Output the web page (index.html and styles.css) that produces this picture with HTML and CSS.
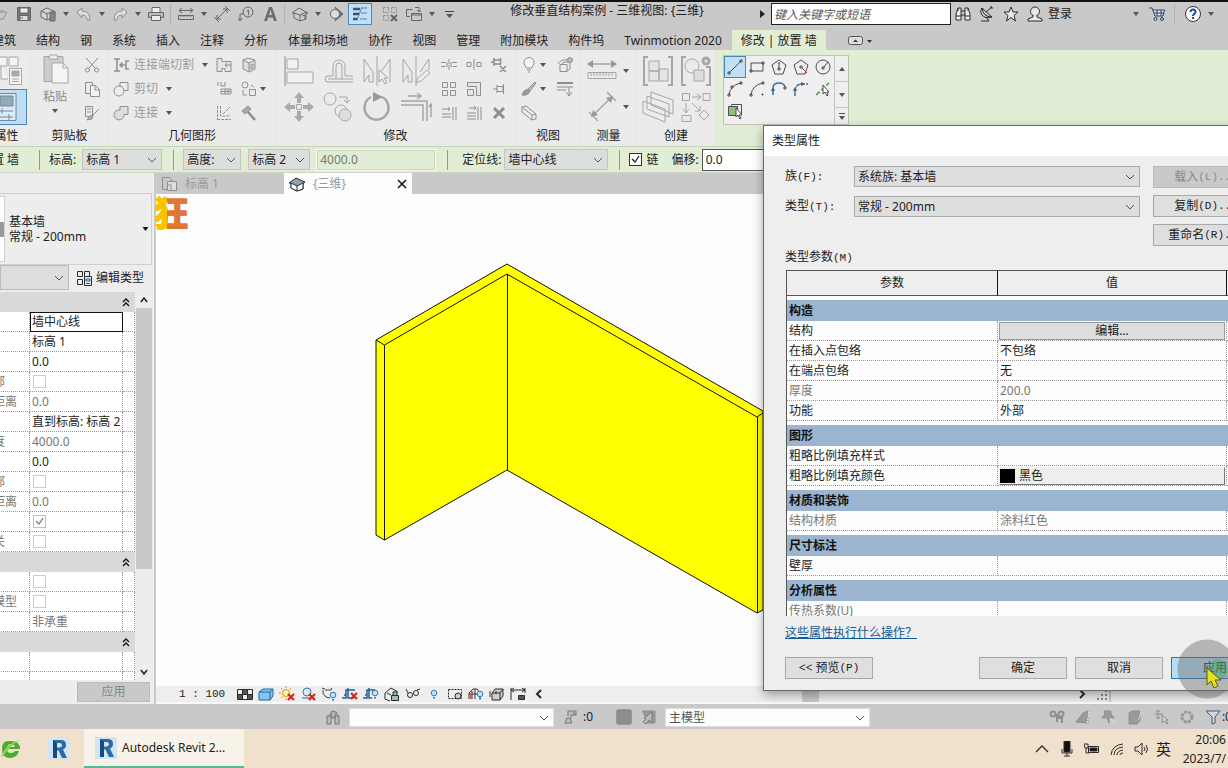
FILE: index.html
```html
<!DOCTYPE html>
<html lang="zh-CN">
<head>
<meta charset="utf-8">
<title>修改垂直结构案例 - 三维视图: {三维}</title>
<link rel="stylesheet" href="styles.css">
</head>
<body>
<svg class="defs" aria-hidden="true">
  <symbol id="caret" viewBox="0 0 6 4"><path d="M0 0h6L3 4z" fill="currentColor" stroke="none"/></symbol>
  <symbol id="collapse" viewBox="0 0 8 9"><path d="M1 4l3-3 3 3M1 8l3-3 3 3" fill="none" stroke="#111" stroke-width="1.3"/></symbol>
  <symbol id="bulb" viewBox="0 0 8 10"><circle cx="4" cy="4" r="2.8" fill="#bfe3fb" stroke="#3b78ad"/><path d="M3 8h2v1.500H3z" fill="#3b78ad" stroke="none"/></symbol>
  <symbol id="redx" viewBox="0 0 8 8"><path d="M1 1l6 6M7 1L1 7" stroke="#cf2a1c" stroke-width="2.200" fill="none"/></symbol>
  <symbol id="revit" viewBox="0 0 22 22"><path d="M0 0h22v22H0z" fill="#d3e4f3" stroke="none"/><path d="M5 2h8q5 0 5 5 0 3-3 4.500l4 8.500h-5l-3.500-7.500H9V20H5zM9 5v4.500h3q2-.2 2-2.200T12 5z" fill="#2d6ba8" stroke="none"/><path d="M5 2l4 3v15H5z" fill="#174a80" stroke="none"/></symbol>
</svg>
<div class="app">

<header class="titlebar">
  <div class="qat">
    <button class="tool open" aria-label="打开"><svg class="i"><path d="M1 13L5 6h10l-4 7zM1 12V3h5l2 2h4"/></svg></button>
    <button class="tool" aria-label="保存"><svg class="i dark"><path d="M1.500 1.500h13v13h-13z" fill="#777"/><path d="M4 2h8v5H4z" fill="#eee"/><path d="M4 9.500h8v5H4z" fill="#ddd"/><path d="M6 11v2"/></svg></button>
    <button class="tool" aria-label="同步"><svg class="i dark"><path d="M1 5l6-3 6 3v6l-6 3-6-3zM1 5l6 3 6-3M7 8v6" fill="#d8d8d8"/><path d="M10 7h5v8h-5z" fill="#888"/><path d="M12 5h3v3"/></svg></button>
    <button class="drop" aria-label="同步选项"><svg class="caret"><use href="#caret"/></svg></button>
    <button class="tool" aria-label="放弃"><svg class="i"><path d="M1 6l5-4v3q8 0 8 9h-3q0-5-5-5v3z" fill="#ddd"/></svg></button>
    <button class="drop" aria-label="放弃列表"><svg class="caret"><use href="#caret"/></svg></button>
    <button class="tool" aria-label="重做"><svg class="i"><path d="M15 6l-5-4v3q-8 0-8 9h3q0-5 5-5v3z" fill="#ddd"/></svg></button>
    <button class="drop" aria-label="重做列表"><svg class="caret"><use href="#caret"/></svg></button>
    <button class="tool" aria-label="打印"><svg class="i dark"><path d="M4 6V1.500h8V6" fill="#eee"/><path d="M.5 6.500h15v5H.5z" fill="#bbb"/><path d="M3.500 9.500h9v5h-9z" fill="#eee"/></svg></button>
    <i class="bar"></i>
    <button class="tool" aria-label="测量"><svg class="i dark"><path d="M1 4.500h14M4 2L1 4.500 4 7M12 2l3 2.500L12 7M.5 9.500h15v4H.5zM3 9v2m3-2v2m3-2v2m3-2v2"/></svg></button>
    <button class="drop" aria-label="测量选项"><svg class="caret"><use href="#caret"/></svg></button>
    <button class="tool" aria-label="对齐尺寸标注"><svg class="i dark"><path d="M3 13L13 3M3 9v4h4M9 3h4v4M0 11l5 5M11 0l5 5"/></svg></button>
    <button class="tool" aria-label="按类别标记"><svg class="i dark"><circle cx="10" cy="6" r="5"/><path d="M9 5l1.500-1v5M5 8H2v6M0 12l2 3 2-3"/></svg></button>
    <button class="tool" aria-label="文字"><svg class="i"><path d="M2 15L7 1h3l5 14h-3l-1.200-3.500H6.200L5 15zM7 9h3L8.500 4z" fill="#6d6d6d" stroke="none" fill-rule="evenodd"/></svg></button>
    <i class="bar"></i>
    <button class="tool" aria-label="默认三维视图"><svg class="i dark"><path d="M0 7l7-5 9 5H14v6l-6 2-6-3V7z" fill="#ccc"/><path d="M2 7l6 2 6-3M8 9v6M10 10l3-1v4"/></svg></button>
    <button class="drop" aria-label="三维视图选项"><svg class="caret"><use href="#caret"/></svg></button>
    <button class="tool" aria-label="剖面"><svg class="i dark"><path d="M7 1l8 7-8 7q5-7 0-14z" fill="#777"/><circle cx="7" cy="8" r="4.500" fill="#ddd"/></svg></button>
    <button class="tool selected" aria-label="细线" aria-pressed="true"><svg class="i"><path d="M1 3h7M1 8h6M1 13h5" stroke="#30587c" stroke-width="2.500"/><path d="M10 2h5M9 7h6M8 13h7M10 1L5 14" stroke="#607f9b"/></svg></button>
    <i class="bar blank"></i>
    <button class="tool" aria-label="关闭非活动视图"><svg class="i"><path d="M1.500 1.500h5v5h-5zM9.500 1.500h5v5h-5zM1.500 9.500h5v5h-5z" stroke-dasharray="2 1"/><path d="M9 9l6 6M15 9l-6 6" stroke="#666" stroke-width="2"/></svg></button>
    <button class="tool" aria-label="切换窗口"><svg class="i dark"><path d="M5.500 7.500h10v7h-10zM5.500 9h10M.5 10V3.500h6M9 1.500h4V5M11 4l2 2 2-2M.5 10.500H4"/></svg></button>
    <button class="drop" aria-label="窗口列表"><svg class="caret"><use href="#caret"/></svg></button>
    <button class="drop custom" aria-label="自定义快速访问工具栏"><svg class="i"><path d="M4 5.500h9" stroke="#444"/><path d="M5 8h7l-3.500 4z" fill="#555" stroke="none"/></svg></button>
  </div>
  <h1 class="doc-title">修改垂直结构案例 - 三维视图: {三维}</h1>
  <div class="infocenter">
    <span class="expand"><svg viewBox="0 0 5 8"><path d="M0 0l5 4-5 4z" fill="#222"/></svg></span>
    <input class="search" type="text" placeholder="键入关键字或短语" aria-label="搜索">
    <button class="tool" aria-label="查找"><svg class="i ink"><path d="M1 14V8l2-6h3v12zM15 14V8l-2-6h-3v12zM6 5h4M6 9h4M3 2v3M13 2v3" fill="#eee"/><path d="M1 10h5M10 10h5"/></svg></button>
    <button class="tool" aria-label="通讯中心"><svg class="i ink"><path d="M3 2q1 9 10 9Q6 13 3 9T3 2z" fill="#ccc"/><path d="M3 2l10 9M7 6l6-5M11 1h2v2M2 15h8l-3-4"/></svg></button>
    <button class="tool" aria-label="收藏夹"><svg class="i ink"><path d="M8 1l2 5h5l-4 3.500 1.500 5.500L8 11.500 3.500 15 5 9.500 1 6h5z" fill="#e8e8e8"/></svg></button>
    <button class="account"><svg class="i ink"><circle cx="8" cy="5.500" r="4.500" fill="#e8e8e8"/><path d="M6 9v2L1 13v2h14v-2l-5-2V9" fill="#e8e8e8"/></svg><span>登录</span><svg class="caret last"><use href="#caret"/></svg></button>
    <button class="tool cart" aria-label="应用商店"><svg class="i"><path d="M0 2h3l3 8h8l1.500-6H4" stroke="#2c456b" fill="#dce5f0"/><path d="M8 4v6m4-6v6M5 7h10" stroke="#2c456b"/><circle cx="6.500" cy="13" r="1.500" stroke="#2c456b"/><circle cx="13" cy="13" r="1.500" stroke="#2c456b"/></svg></button>
    <i class="bar"></i>
    <button class="tool help-btn" aria-label="帮助"><svg class="i"><circle cx="8" cy="8" r="7.500" fill="#fff" stroke="#333"/><path d="M5.500 6q0-2.500 2.500-2.500T10.500 6q0 1-1.200 1.800T8 10M8 11v2" stroke="#1d4fa3" stroke-width="2"/></svg></button>
    <button class="drop" aria-label="帮助选项"><svg class="caret"><use href="#caret"/></svg></button>
  </div>
</header>

<nav class="tabs">
  <button>建筑</button><button>结构</button><button>钢</button><button>系统</button><button>插入</button><button>注释</button><button>分析</button><button>体量和场地</button><button>协作</button><button>视图</button><button>管理</button><button>附加模块</button><button>构件坞</button><button>Twinmotion 2020</button><button class="active">修改 | 放置 墙</button>
  <button class="minimize" aria-label="最小化功能区"><svg viewBox="0 0 22 10"><rect x=".5" y=".5" width="14" height="8" rx="2" fill="#ddd" stroke="#555"/><path d="M5 6h5L7.500 3.500z" fill="#333"/><path d="M19 4h5l-2.500 3z" fill="#333"/></svg></button>
</nav>

<section class="ribbon" aria-label="功能区">
  <div class="panel p-prop">
    <div class="body rows2">
      <button class="big" aria-label="类型属性"><svg class="l"><path d="M6 2h9v9H6zM17 2h9v9h-9zM9 11v13h7" fill="#f4f4f4"/><path d="M17.500 13.500h12v16h-12z" fill="#f4f4f4"/><path d="M20 16h7v5h-7zM20 24h7M20 26.500h7" fill="#aaa"/></svg></button>
      <button class="big selected" aria-label="属性" aria-pressed="true"><svg class="l blue"><path d="M4 2.500h20v27H4z" fill="#dcebf7"/><path d="M8 5h13v10H8z" fill="#93a9bc"/><path d="M6 20h15M10 17v6M6 26h15M17 23v6"/></svg></button>
    </div>
    <h2>属性</h2>
  </div>
  <div class="panel p-clip">
    <div class="body">
      <button class="paste"><svg class="l"><path d="M5 3.500h19v25H5z" fill="#ccc"/><path d="M10 6l1-4h7l1 4z" fill="#eee"/><path d="M13 10h11l5 5v15H13z" fill="#f5f5f5"/><path d="M24 10v5h5"/></svg><span>粘贴</span><svg class="caret"><use href="#caret"/></svg></button>
      <div class="rows3">
        <button class="small" aria-label="剪切"><svg class="i"><path d="M2 1l9 10M14 1L5 11"/><circle cx="3.500" cy="13" r="2"/><circle cx="12.500" cy="13" r="2"/></svg></button>
        <button class="small" aria-label="复制"><svg class="i"><path d="M1.500 1.500h7v11h-7z"/><path d="M6.500 4.500h5l4 4v7h-9z" fill="#f3f3f3"/><path d="M11 4.500V9h4"/></svg></button>
        <button class="small" aria-label="匹配类型"><svg class="i"><path d="M1.500 1.500h7v10h-7zM3 4h4M3 7h4"/><path d="M15 4l-6 6-1 4-5 1 3-4 3-1" fill="#bbb"/></svg></button>
      </div>
    </div>
    <h2>剪贴板</h2>
  </div>
  <div class="panel p-geom">
    <div class="body">
      <div class="rows3 texts">
        <button><svg class="i"><path d="M1 2h6M1 14h6M4 2v12M16 4h-3v8h3M7 8h5M9.500 5.500L7 8l2.500 2.500" stroke-width="1.500"/></svg><span>连接端切割</span><svg class="caret"><use href="#caret"/></svg></button>
        <button><svg class="i"><path d="M7 1.500h8v8H7z"/><circle cx="6" cy="10" r="5" fill="#eee"/></svg><span>剪切</span><svg class="caret"><use href="#caret"/></svg></button>
        <button><svg class="i"><path d="M7 1.500h8v8h-4A5 5 0 1 1 7 5z" fill="#ddd"/></svg><span>连接</span><svg class="caret"><use href="#caret"/></svg></button>
      </div>
      <div class="rows3">
        <button class="small" aria-label="连接端"><svg class="i"><path d="M1 1.500h5v3h9v10H9v-3H6v3H1z" fill="#e2e2e2"/><path d="M15 8H9M11 6L9 8l2 2"/></svg></button>
        <button class="small" aria-label="墙连接"><svg class="i"><path d="M2 1v4M5 1v4h4V1M5 8h10v5H5zM5 10.500h10M9 8v5M12 8v5"/></svg></button>
        <button class="small" aria-label="梁柱连接"><svg class="i"><path d="M1.500 1v14M4.500 1v10h10M1 14.500h14M7 9l7-7" stroke-dasharray="3 1"/></svg></button>
      </div>
      <div class="rows3">
        <button class="small" aria-label="拆分面"><svg class="i"><path d="M2 3l6 3 6-3v9l-6 3-6-3zM8 6v9M2 3l5-2 7 2" fill="#ddd"/><path d="M10 8l2-1v4l-2 1z" fill="#eee"/></svg></button>
        <button class="small" aria-label="填色"><svg class="i"><circle cx="4" cy="4" r="3"/><path d="M10 4l3 2M8.500 8.500h6v6h-6zM2 9v5h4"/></svg><svg class="caret out"><use href="#caret"/></svg></button>
        <button class="small" aria-label="拆除"><svg class="i"><path d="M1 6l6-5 3 3-6 5z" fill="#aaa"/><path d="M7 7l7 8" stroke-width="2.500"/></svg></button>
      </div>
    </div>
    <h2>几何图形</h2>
  </div>
  <div class="panel p-modify">
    <div class="body">
      <div class="bigs">
        <button class="big" aria-label="对齐"><svg class="l"><path d="M2 1v30" stroke="#888"/><path d="M4 4h11v10H4zM4 17h26v11H4z" fill="#f2f2f2"/></svg></button>
        <button class="big" aria-label="偏移"><svg class="l"><path d="M31 27H6a3 3 0 0 1 0-6h5V11a6 6 0 0 1 12 0v10h8M31 24H6M14 24V11a3 3 0 0 1 6 0v13"/></svg></button>
        <button class="big" aria-label="镜像-拾取轴"><svg class="l"><path d="M3 27V4l9 13v10H8v-7zM16 1v30M29 27V4l-9 13"/><path d="M18 15v12l3-3 3 5 2-1-3-5h4z" fill="#eee"/></svg></button>
        <button class="big" aria-label="镜像-绘制轴"><svg class="l"><path d="M3 27V4l9 13v10H8v-7zM16 1v30M29 15V4l-9 13"/><path d="M16 28l2-5 9-8 3 3-9 8z" fill="#eee"/></svg></button>
        <button class="big" aria-label="移动"><svg class="l"><path d="M16 1l5 6h-3v5h-4V7h-3zM16 31l5-6h-3v-5h-4v5h-3zM1 16l6-5v3h5v4H7v3zM31 16l-6-5v3h-5v4h5v3z" fill="#aaa" stroke="none"/><path d="M13.500 13.500h5v5h-5z"/></svg></button>
        <button class="big" aria-label="复制"><svg class="l"><circle cx="8" cy="8" r="6"/><path d="M17 6h8v5M22 9l3 3 3-3"/><circle cx="19" cy="20" r="6"/><circle cx="23" cy="24" r="6" fill="#ddd"/></svg></button>
        <button class="big" aria-label="旋转"><svg class="l"><path d="M21 6A12 12 0 1 1 10 6" stroke-width="2.500"/><path d="M12 1l10 5-10 5z" fill="#999" stroke="none"/></svg></button>
        <button class="big" aria-label="修剪"><svg class="l"><path d="M1 10h26v20M1 14h22v16M8 5h12M17 2l4 3-4 3M31 14v12M29 16l2-3 2 3" stroke-width="1.500"/></svg></button>
      </div>
      <div class="smalls">
        <button class="small" aria-label="拆分图元"><svg class="i"><path d="M0 5.500h6v4H0M16 5.500h-6v4h6M8 2v11" stroke-dasharray="5 1"/></svg></button>
        <button class="small" aria-label="用间隙拆分"><svg class="i"><path d="M1 5.500h4v4H1zM15 5.500h-4v4h4zM8 2v11"/></svg></button>
        <button class="small" aria-label="解锁"><svg class="i"><path d="M0 5h3M3 1v8M3 3h6M3 7h6M9.500 1v7M9 9l6 6M15 9l-6 6" stroke-width="1.500"/></svg></button>
        <button class="small" aria-label="阵列"><svg class="i"><path d="M1.500 1.500h5v5h-5zM9.500 1.500h5v5h-5zM1.500 9.500h5v5h-5zM9.500 9.500h5v5h-5z"/></svg></button>
        <button class="small" aria-label="缩放"><svg class="i"><path d="M1.500 1.500h13v13h-4v-9h-9zM1.500 8.500h6v6h-6z" fill="#e5e5e5"/></svg></button>
        <button class="small" aria-label="锁定"><svg class="i"><path d="M2 8h4M6 4v8M6 5.500h6v5H6M12.500 3v10"/></svg></button>
        <button class="small" aria-label="修剪单个"><svg class="i"><path d="M1 4h8M7 2l2 2-2 2M12 2v13M15 2v13M1 9h9M1 12h9"/></svg></button>
        <button class="small" aria-label="修剪多个"><svg class="i"><path d="M3 3h7M8 1l2 2-2 2M12 2v13M15 2v13M1 8h9M1 11h9M1 14h9"/></svg></button>
        <button class="small" aria-label="删除"><svg class="i"><path d="M3 3l10 10M13 3L3 13" stroke-width="3"/></svg></button>
      </div>
    </div>
    <h2>修改</h2>
  </div>
  <div class="panel p-view">
    <div class="body">
      <div class="rows3">
        <button class="small" aria-label="隐藏"><svg class="i"><path d="M5.500 11Q3 8 3 5.500a5 5 0 0 1 10 0Q13 8 10.500 11zM6 13h4M7 15h2" fill="#f3f3f3"/></svg><svg class="caret out"><use href="#caret"/></svg></button>
        <button class="small" aria-label="替换"><svg class="i"><path d="M14 1L7 8l2 2 6-8z" fill="#bbb"/><path d="M7 8q-5 1-6 6 6 1 8-4z" fill="#999"/></svg><svg class="caret out"><use href="#caret"/></svg></button>
        <button class="small" aria-label="线处理"><svg class="i"><path d="M1 2l4-1 10 8v5l-4 1L1 7zM1 2l10 8v5M11 10l4-1"/></svg></button>
      </div>
      <div class="rows3">
        <button class="small" aria-label="置换图元"><svg class="i"><path d="M1 7q3-5 9-4M3 7.500h7v7H3zM5 7l2-2h6v7l-3 2"/><circle cx="13" cy="3" r="2.500" fill="#bbb"/></svg></button>
        <button class="small" aria-label="线宽"><svg class="i"><path d="M0 2h16" stroke-width="2"/><path d="M0 6h16M0 9h9M12 6v8M9 11l3 4 3-4"/></svg></button>
      </div>
    </div>
    <h2>视图</h2>
  </div>
  <div class="panel p-measure">
    <div class="body rows2">
      <button class="big wide" aria-label="测量"><svg class="l"><path d="M2 9h28" stroke-width="1.500"/><path d="M1 9l6-4v8zM31 9l-6-4v8z" fill="#999" stroke="none"/><path d="M2 17.500h28v6H2zM5 18v3m3-3v3m3-3v3m3-3v3m3-3v3m3-3v3m3-3v3m3-3v3"/></svg><svg class="caret"><use href="#caret"/></svg></button>
      <button class="big wide" aria-label="标注"><svg class="l"><path d="M6 25L26 6M3 21l9 9M21 1l9 9" stroke-width="1.500"/><path d="M5 26l2-7 5 5zM27 5l-2 7-5-5z" fill="#999" stroke="none"/></svg><svg class="caret"><use href="#caret"/></svg></button>
    </div>
    <h2>测量</h2>
  </div>
  <div class="panel p-create">
    <div class="body bigs">
      <button class="big" aria-label="创建组"><svg class="l"><path d="M6 2H2v28h4M26 2h4v28h-4" stroke-width="2"/><path d="M7 6h10v10H7zM7 16h10v10H7zM17 14h9v12h-9z" fill="#e4e4e4"/></svg></button>
      <button class="big" aria-label="创建部件"><svg class="l"><path d="M6 2H2v28h4M26 12h4v18h-4" stroke-width="2"/><circle cx="12" cy="11" r="7"/><path d="M14 15h10v11H14z" fill="#ddd"/><circle cx="26" cy="6" r="3" stroke-width="3"/></svg></button>
      <button class="big" aria-label="创建零件"><svg class="l"><path d="M9 1l22 8v14L9 14zM5 5l22 8v13L5 18zM1 10l22 8v13L1 22z" fill="#ececec"/></svg></button>
      <button class="big" aria-label="创建类似"><svg class="l"><path d="M2.500 2.500h7v7h-7zM23 2.500h7v7h-7zM12 6h8M17 3l4 3-4 3M6 12v9M3 18l3 4 3-4M12 12l8 8M2 24.500h9v6H2zM24 19l5 5-5 5-5-5zM20 15v5h-5"/></svg></button>
    </div>
    <h2>创建</h2>
  </div>
  <div class="gallery">
    <div class="shapes">
      <button class="selected" aria-label="直线" aria-pressed="true"><svg class="i draw"><path d="M2 14L14 2M1 13h2v2H1zM13 1h2v2h-2z"/></svg></button>
      <button aria-label="矩形"><svg class="i draw"><path d="M2 4h12v8H2zM1 11h2v2H1zM13 3h2v2h-2z"/></svg></button>
      <button aria-label="内接多边形"><svg class="i draw"><path d="M8 1l7 5-3 9H4L1 6zM8 9V4M7 9h2v2H7zM7 4h2"/></svg></button>
      <button aria-label="外接多边形"><svg class="i draw"><path d="M8 1l7 5-3 9H4L1 6zM7 7h2v2H7zM9 9l3 3"/><path d="M11 11l3 3" stroke="#c33"/></svg></button>
      <button aria-label="圆形"><svg class="i draw"><circle cx="8" cy="8" r="7"/><path d="M7 8h2v2H7zM9 8l4-5"/></svg></button>
      <button aria-label="起点终点弧"><svg class="i draw"><path d="M2 14Q3 4 14 2M1 13h2v2H1zM13 1h2v2h-2zM4 5h2v2H4z"/></svg></button>
      <button aria-label="圆心端点弧"><svg class="i draw"><path d="M2 14Q3 4 14 2M1 13h2v2H1zM13 1h2v2h-2zM13 13h1v1h-1z"/></svg></button>
      <button aria-label="相切弧"><svg class="i draw"><path d="M2 14V7q0-5 6-5 5 0 6 4" stroke="#2e75b6" stroke-width="1.500"/><path d="M1 8h2v2H1zM13 6h2v2h-2z"/></svg></button>
      <button aria-label="圆角弧"><svg class="i draw"><path d="M2 15V9q1-6 7-6h6" stroke="#2e75b6" stroke-width="1.500" stroke-dasharray="4 1"/><path d="M1 8h2v2H1zM8 2h2v2H8z"/></svg></button>
      <button aria-label="拾取线"><svg class="i draw"><path d="M1 14L14 2" stroke="#3f9b36" stroke-width="1.500" stroke-dasharray="5 2"/><path d="M8 4v9l2-2 2 4 1-1-1-3h2z" fill="#fff"/></svg></button>
      <button aria-label="拾取面"><svg class="i draw"><path d="M4.500 1.500h10v10h-10z"/><path d="M1.500 3.500h9v9h-9z" fill="#8fbd7a"/><path d="M9 5v9l2-2 2 4 1-1-2-3h3z" fill="#fff"/></svg></button>
    </div>
    <div class="gallery-scroll">
      <button aria-label="上一行"><svg class="caret flip"><use href="#caret"/></svg></button>
      <button aria-label="下一行"><svg class="caret"><use href="#caret"/></svg></button>
      <button class="more" aria-label="更多"><svg class="more-icon" viewBox="0 0 6 7"><path d="M0 0h6v1H0zM0 3h6L3 7z" fill="#555"/></svg></button>
    </div>
  </div>
</section>

<section class="options" aria-label="选项栏">
  <span class="context">置 墙</span>
  <i class="rule"></i>
  <label for="level">标高:</label>
  <select id="level" class="pick w80"><option>标高 1</option></select>
  <i class="rule"></i>
  <select class="pick w58" aria-label="高度方向"><option>高度:</option></select>
  <select class="pick w62" aria-label="顶部标高"><option>标高 2</option></select>
  <input class="num" type="text" value="4000.0" aria-label="高度" disabled>
  <i class="rule"></i>
  <label for="locline">定位线:</label>
  <select id="locline" class="pick w104"><option>墙中心线</option></select>
  <i class="rule"></i>
  <input type="checkbox" id="chain" class="tick" checked>
  <label for="chain" class="chain">链</label>
  <label for="offset">偏移:</label>
  <input id="offset" class="offset" type="text" value="0.0">
</section>

<main class="workspace">
  <aside class="props" aria-label="属性">
    <div class="type-box">
      <span class="preview"><i></i></span>
      <p>基本墙<br>常规 - 200mm</p>
      <svg class="caret"><use href="#caret"/></svg>
    </div>
    <div class="edit-row">
      <select class="pick filter" aria-label="图元过滤器"><option></option></select>
      <button class="edit-type"><svg class="i ink"><path d="M1.500 1.500h5v5h-5zM8.500 1.500h5v5h-5zM1.500 9.500h5v5h-5z"/><path d="M8.500 6.500h7v9h-7z" fill="#e4edf7"/><path d="M10 9h4v2h-4zM10 13.500h4" stroke="#2d5d92"/></svg><span>编辑类型</span></button>
    </div>
    <div class="prop-scroll">
      <div class="prop-list">
        <table class="prop-table">
          <colgroup><col class="c1"><col class="c2"><col class="c3"></colgroup>
          <tbody>
          <tr class="head"><th colspan="3"><svg><use href="#collapse"/></svg></th></tr>
          <tr><td></td><td class="focus">墙中心线</td><td></td></tr>
          <tr><td></td><td>标高 1</td><td></td></tr>
          <tr><td></td><td>0.0</td><td></td></tr>
          <tr class="off"><td>部</td><td><input type="checkbox" class="tick" aria-label="底部" disabled></td><td></td></tr>
          <tr class="off"><td>距离</td><td>0.0</td><td></td></tr>
          <tr><td></td><td>直到标高: 标高 2</td><td></td></tr>
          <tr class="off"><td>度</td><td>4000.0</td><td></td></tr>
          <tr><td></td><td>0.0</td><td></td></tr>
          <tr class="off"><td>部</td><td><input type="checkbox" class="tick" aria-label="顶部" disabled></td><td></td></tr>
          <tr class="off"><td>距离</td><td>0.0</td><td></td></tr>
          <tr class="off"><td></td><td><input type="checkbox" class="tick" aria-label="房间边界" checked disabled></td><td></td></tr>
          <tr class="off"><td>关</td><td><input type="checkbox" class="tick" aria-label="体量相关" disabled></td><td></td></tr>
          <tr class="head"><th colspan="3"><svg><use href="#collapse"/></svg></th></tr>
          <tr class="off"><td></td><td><input type="checkbox" class="tick" aria-label="结构" disabled></td><td></td></tr>
          <tr class="off"><td>模型</td><td><input type="checkbox" class="tick" aria-label="分析模型" disabled></td><td></td></tr>
          <tr class="off"><td></td><td>非承重</td><td></td></tr>
          <tr class="head"><th colspan="3"><svg><use href="#collapse"/></svg></th></tr>
          <tr><td></td><td></td><td></td></tr>
          <tr><td></td><td></td><td></td></tr>
          </tbody>
        </table>
      </div>
      <div class="scrollbar">
        <svg viewBox="0 0 16 16"><path d="M5 10l3-4 3 4"/></svg>
        <i class="thumb"></i>
        <svg viewBox="0 0 16 16"><path d="M5 6l3 4 3-4"/></svg>
      </div>
    </div>
    <div class="apply-row"><button disabled>应用</button></div>
  </aside>

  <section class="view">
    <div class="view-tabs">
      <button class="vtab"><svg class="i"><path d="M1.500 1.500h7l2 2v10h-9z"/><path d="M6.500 5.500h9v9h-9z" fill="#ddd"/><path d="M6 9h4v5"/></svg><span>标高 1</span></button>
      <button class="vtab active"><svg class="i ink"><path d="M0 7l7-5 9 4-2 1v6l-6 2-6-3V7z" fill="#8fa3ae"/><path d="M2 7l6 3v5l-6-3zM8 10l6-3v6l-6 2" fill="#fff"/></svg><span>{三维}</span><svg class="close"><path d="M1 1l8 8M9 1L1 9"/></svg></button>
    </div>
    <svg class="model" role="img" aria-label="墙体三维视图">
      <defs><linearGradient id="mark"><stop offset=".38" stop-color="#f7c500"/><stop offset=".38" stop-color="#df7836"/></linearGradient></defs>
      <text class="watermark" x="-1" y="32" fill="url(#mark)" stroke="url(#mark)">狂</text>
      <g fill="#ffff00" stroke="#111" stroke-linejoin="round">
        <path d="M221 146L352 70 608 217V416L602 419 352 276 229.500 346 221 341z"/>
        <path d="M221 146l8.500 5L352 80l250 143 6-4M229.500 151v195M602.500 223v196M352.500 80v196" fill="none"/>
      </g>
    </svg>
    <div class="view-bar">
      <div class="controls">
        <span class="scale">1 : 100</span>
        <button aria-label="详细程度"><svg class="i ink"><path d="M.5 3.500h15v10H.5zM.5 8.500h15M5.500 4v9M10.500 4v9" fill="#eee"/><path d="M6 4h4v4H6zM1 9h4v4H1zM11 9h4v4h-4z" fill="#555" stroke="none"/></svg></button>
        <button aria-label="视觉样式"><svg class="i"><path d="M1 6l4-3h10v7l-3 4H1zM1 6h11v8M12 6l3-3" fill="#82c5ef" stroke="#226a9c"/></svg></button>
        <button aria-label="日光路径"><svg class="i"><circle cx="7" cy="7" r="3.500" fill="#fff2a8" stroke="#d89b00"/><path d="M7 0v2M7 12v2M0 7h2M2 2l1.500 1.500M12 2l-1.500 1.500M2 12l1.500-1.500" stroke="#d89b00"/><use href="#redx" x="8" y="7" width="8" height="8"/></svg></button>
        <button aria-label="阴影"><svg class="i"><circle cx="7" cy="6" r="4" fill="#d7ecfa" stroke="#3b78ad"/><path d="M2 12h8" stroke="#555"/><use href="#redx" x="8" y="7" width="8" height="8"/></svg></button>
        <button aria-label="渲染"><svg class="i"><path d="M1 2l3 1M2 4q-1 4 3 7l4 1M4 4l6 0 1-2" stroke="#444"/><use href="#bulb" x="8" y="5" width="8" height="10"/></svg></button>
        <button aria-label="裁剪视图"><svg class="i"><path d="M0 12h4V4h9M6 2v10h6M2 9h2" stroke="#285f8f" stroke-width="1.500"/><use href="#redx" x="8" y="6" width="8" height="8"/></svg></button>
        <button aria-label="显示裁剪区域"><svg class="i"><path d="M0 12h4V4h8M6 2v10h3M2 9h2" stroke="#285f8f" stroke-width="1.500"/><use href="#bulb" x="8" y="3" width="8" height="10"/></svg></button>
        <button aria-label="锁定三维视图"><svg class="i ink"><path d="M1 7l6-5 7 4M1 7v6l5 2M3 7l4 2"/><path d="M7.500 9.500h7v5h-7zM9 9V6h4v3" fill="#9cc0ad"/></svg></button>
        <button aria-label="临时隐藏"><svg class="i ink"><path d="M1 3l2 4M15 3l-3 1"/><circle cx="5" cy="9" r="2.500"/><circle cx="11" cy="7" r="2.500"/></svg></button>
        <button aria-label="显示隐藏图元"><svg class="i"><use href="#bulb" x="4" y="3" width="8" height="10"/></svg></button>
        <button aria-label="临时视图属性"><svg class="i ink"><path d="M1.500 3.500h13v9h-13z" stroke-dasharray="2 1"/><circle cx="11" cy="10" r="3" fill="#ccc"/></svg></button>
        <button aria-label="分析模型"><svg class="i"><path d="M1 13V7l4-4h4l3 4v6M4 13V5M7 13V3M1 8h8" stroke="#333"/><path d="M2 8h2v5H2z" fill="#c9634f" stroke="none"/><use href="#bulb" x="8" y="4" width="8" height="10"/></svg></button>
        <button aria-label="位移集"><svg class="i ink"><path d="M3 7l3-4h8v7l-3 4H3zM3 7h8v7M11 7l3-4M1 5v6M7 5v3" fill="#ccc"/></svg></button>
        <button aria-label="约束"><svg class="i ink"><path d="M1 2v12M15 2v5M1 4h14M4 2L1 4l3 2M12 2l3 2-3 2"/><path d="M8.500 9.500h6v4h-6z" fill="#555"/></svg></button>
        <button class="fold" aria-label="收起"><svg class="i ink"><path d="M10 4L6 8l4 4" stroke-width="2"/></svg></button>
      </div>
      <div class="hscroll"><i class="hthumb"></i><svg class="i ink"><path d="M5 4l4 4-4 4" stroke-width="2"/></svg><svg class="i"><path d="M13 4v2M13 8v2M13 12v2M9 8v2M9 12v2M5 12v2" stroke-width="2"/></svg></div>
      <div class="side"></div>
    </div>
  </section>
</main>

<footer class="status">
  <svg class="i"><path d="M2 7h4v8H2zM10 7h4v8h-4zM4 7l3-5 4 1 2 4M7 4v5h3V4" fill="#bbb" stroke="#777"/></svg>
  <select class="pick flat" aria-label="工作集"><option></option></select>
  <span class="editable"><svg class="i"><path d="M5 2h8v4H8v3M5 2v5M2 14h7l-2-5H4zM11 3v3" stroke="#777" fill="#bbb"/></svg>:0</span>
  <svg class="i"><rect x=".5" y=".5" width="15" height="15" rx="2" fill="#8d8d8d" stroke="#999"/></svg>
  <svg class="i"><path d="M1 2h13v12H6" fill="#999"/><path d="M3 9l8-6v11l-3-3-3 4-3-2 3-3z" fill="#bbb" stroke="#777"/></svg>
  <select class="pick flat" aria-label="设计选项"><option>主模型</option></select>
  <span class="flags">
    <svg class="i"><circle cx="4" cy="5" r="2.500" stroke-width="2"/><circle cx="12" cy="5" r="2.500" stroke-width="2"/><path d="M8 5v8M8 9h5v5" stroke-width="2"/></svg>
    <svg class="i"><path d="M1 13l7-9 5-2v12z" fill="#999"/><path d="M14 3l-2 12" stroke="#eee" stroke-dasharray="2 1"/></svg>
    <svg class="i"><path d="M3 2h7v3l3 4H8v5L6 9H1l3-4z" fill="#999"/><path d="M9 9l5 6" stroke="#eee" stroke-dasharray="2 1"/></svg>
    <svg class="i"><path d="M2 4l3-2h8v10l-3 3H2z" fill="#999"/><path d="M14 3l-3 9" stroke="#eee" stroke-dasharray="2 1"/></svg>
    <svg class="i"><path d="M5 1v9M1 5h9M3 3l2-2 2 2M3 8l2 2 2-2"/><path d="M9 6v8l2-2 3 3 1-1-2-3h2z" fill="#ccc"/></svg>
    <svg class="i"><circle cx="8" cy="8" r="5" stroke="#999" stroke-width="3" stroke-dasharray="3 1"/></svg>
    <svg class="i"><path d="M1 2h14L10 8v6l-3 1V8z" fill="#cfd8df" stroke="#4c5964"/></svg>
    <b>:0</b>
  </span>
</footer>

<footer class="taskbar">
  <button class="launch" aria-label="浏览器"><svg viewBox="0 0 22 22"><path d="M20 11H7q0 4 4 4 3 0 4-2h4q-2 7-9 7-8 0-8-9t8-8q10 0 10 8zM7 9h8q-1-3-4-3T7 9z" fill="#48ad33" fill-rule="evenodd"/><path d="M1 19q5-14 19-17-8 4-17 16z" fill="#8fd04a"/></svg></button>
  <button class="launch revit" aria-label="Revit"><svg><use href="#revit"/></svg></button>
  <button class="task"><svg><use href="#revit"/></svg><span>Autodesk Revit 2...</span></button>
  <div class="tray">
    <svg class="i ink"><path d="M2 11l6-6 6 6" stroke-width="1.300"/></svg>
    <svg class="i ink"><path d="M5 0h6v11H5z" fill="#111"/><path d="M3 8v4h10V8M8 12v3M5 15h6"/></svg>
    <svg class="i ink"><path d="M4.500 5.500h10v6h-10z"/><path d="M6 7h7v3H6z" fill="#111"/><path d="M0 3h4v4H1zM2 7v5h3"/></svg>
    <svg class="i ink"><path d="M2 14Q3 4 14 3M5 14q0-7 9-8M8 14q0-4 6-5M11 14q0-2 3-2"/></svg>
    <svg class="i ink"><path d="M1 6h3l4-4v12l-4-4H1zM10 6q2 2 0 4M12 4q3 4 0 8"/></svg>
    <span class="ime">英</span>
    <span class="clock">20:06<br>2023/7/</span>
  </div>
</footer>

<div class="dialog" role="dialog" aria-labelledby="dlg-title">
  <h2 id="dlg-title">类型属性</h2>
  <div class="dlg-body">
    <div class="dlg-top">
      <div class="fields">
        <label for="family">族<span class="half">(F):</span></label>
        <select id="family" class="pick"><option>系统族: 基本墙</option></select>
        <label for="wtype">类型<span class="half">(T):</span></label>
        <select id="wtype" class="pick"><option>常规 - 200mm</option></select>
      </div>
      <div class="actions">
        <button disabled>载入<span class="half">(L)...</span></button>
        <button>复制<span class="half">(D)...</span></button>
        <button>重命名<span class="half">(R)...</span></button>
      </div>
    </div>
    <p class="caption">类型参数<span class="half">(M)</span></p>
    <div class="params">
      <table>
        <colgroup><col class="k"><col class="v"><col></colgroup>
        <thead><tr><th>参数</th><th>值</th><th></th></tr></thead>
        <tbody>
        <tr class="group"><th colspan="2">构造</th><th>=</th></tr>
        <tr><td>结构</td><td class="cell"><button class="edit">编辑...</button></td><td></td></tr>
        <tr><td>在插入点包络</td><td>不包络</td><td></td></tr>
        <tr><td>在端点包络</td><td>无</td><td></td></tr>
        <tr class="off"><td>厚度</td><td>200.0</td><td></td></tr>
        <tr><td>功能</td><td>外部</td><td></td></tr>
        <tr class="group"><th colspan="2">图形</th><th>=</th></tr>
        <tr><td>粗略比例填充样式</td><td></td><td></td></tr>
        <tr><td>粗略比例填充颜色</td><td class="cell"><button class="color"><i></i>黑色</button></td><td></td></tr>
        <tr class="group"><th colspan="2">材质和装饰</th><th>=</th></tr>
        <tr class="off"><td>结构材质</td><td>涂料红色</td><td></td></tr>
        <tr class="group"><th colspan="2">尺寸标注</th><th>=</th></tr>
        <tr><td>壁厚</td><td></td><td></td></tr>
        <tr class="group"><th colspan="2">分析属性</th><th>=</th></tr>
        <tr class="off"><td>传热系数(U)</td><td></td><td></td></tr>
        </tbody>
      </table>
    </div>
    <a class="help" href="#">这些属性执行什么操作？</a>
    <div class="dlg-buttons">
      <button>&lt;&lt; 预览<span class="half">(P)</span></button>
      <button class="push">确定</button>
      <button>取消</button>
      <button class="default">应用</button>
    </div>
  </div>
</div>

<div class="pointer"><svg viewBox="0 0 60 60"><circle cx="30" cy="30" r="29.500" fill="#666" fill-opacity=".42"/><circle cx="41" cy="30" r="10" fill="#2fae62" fill-opacity=".4"/><path d="M30 29v17l4-4 3 7 4-2-3-6h6z" fill="#e6e21a" stroke="#5d5a10"/></svg></div>
</div>
</body>
</html>
```

FILE: styles.css
```css
* { box-sizing: border-box; }

body {
  margin: 0;
  font: 12px/16px "Noto Sans", "Noto Sans CJK SC", sans-serif;
  color: #222;
  background: #c9c9c9;
}

button, input, select { font: inherit; color: inherit; margin: 0; }
button { padding: 0; border: 0; background: none; display: flex; align-items: center; justify-content: center; white-space: nowrap; }
h1, h2, p { margin: 0; font-size: 12px; font-weight: 400; }

.defs { display: none; }
.app { position: relative; display: flex; flex-direction: column; height: 100vh; overflow: hidden; }

/* icons */
.i { width: 16px; height: 16px; flex: none; fill: none; stroke: #8f8f8f; }
.l { width: 32px; height: 32px; flex: none; fill: none; stroke: #a6a6a6; }
.dark { stroke: #666; }
.ink { stroke: #2c2c2c; }
.blue { stroke: #71899d; }
.draw { stroke: #4d4d4d; stroke-width: 1; }
.caret { width: 6px; height: 4px; flex: none; color: #555; }
.flip { transform: rotate(180deg); }

/* title bar */
.titlebar { display: flex; height: 30px; flex: none; align-items: flex-start; border-top: 2px solid #111; background: #c9c9c9; }
.qat { display: flex; height: 24px; align-items: center; margin-left: -12px; }
.tool { width: 24px; height: 22px; flex: none; }
.drop { width: 12px; height: 22px; flex: none; }
.custom { width: 22px; }
.bar { width: 1px; height: 20px; margin: 0 3px 0 2px; background: #b2b2b2; }
.blank { background: none; }
.selected { background: #c3dff5; outline: 1px solid #4a86b8; outline-offset: -1px; }
.doc-title { flex: 1; padding-right: 6px; line-height: 18px; text-align: center; white-space: nowrap; }
.infocenter { display: flex; height: 24px; align-items: center; padding-right: 11px; }
.expand { width: 11px; display: flex; }
.expand svg { width: 5px; height: 8px; }
.search { width: 180px; height: 22px; padding: 0 2px; border: 1px solid #222; background: #fff; font-style: italic; }
.search::placeholder { color: #555; opacity: 1; }
.account { width: 116px; padding-left: 4px; gap: 5px; justify-content: flex-start; }
.last { margin-left: auto; }
.cart { margin: 0 3px 0 6px; }
.help-btn { margin-left: 3px; }

/* ribbon tabs */
.tabs { display: flex; height: 20px; flex: none; margin-left: -18px; }
.tabs button { padding: 2px 10px 0; }
.tabs .active { padding: 2px 9px 0; background: #e1eed5; }
.tabs .minimize { padding: 2px 22px 0; }
.minimize svg { width: 22px; height: 10px; overflow: visible; }

/* ribbon */
.ribbon { display: flex; height: 97px; flex: none; background: #e1eed5; border-bottom: 1px solid #c5d3ba; }
.panel { display: flex; flex-direction: column; flex: none; background: #ebebeb; border-right: 1px solid #e2e8dc; }
.panel h2 { text-align: center; line-height: 22px; }
.body { display: flex; height: 75px; padding-top: 3px; }
.rows2 { flex-direction: column; }
.rows3 { display: flex; flex-direction: column; width: 25px; flex: none; }
.big { width: 39px; height: 36px; flex: none; }
.small { width: 25px; height: 24px; flex: none; justify-content: flex-start; padding-left: 4px; gap: 3px; }
.p-prop { width: 48px; margin-left: -17px; }
.p-prop .body { padding-left: 5px; }
.p-prop .selected { background: #bedcf3; }
.p-clip { width: 78px; }
.p-clip .body { padding-left: 2px; gap: 3px; }
.paste { flex-direction: column; justify-content: flex-start; width: 44px; color: #8b8b8b; gap: 4px; }
.p-geom { width: 167px; }
.texts { width: 103px; }
.texts button { height: 24px; padding-left: 4px; gap: 5px; justify-content: flex-start; color: #9b9b9b; }
.texts .caret { margin-left: 3px; }
.p-modify { width: 240px; }
.p-modify .body { padding-left: 3px; gap: 2px; }
.bigs { display: grid; grid-template-columns: repeat(4, 39px); }
.smalls { display: grid; grid-template-columns: repeat(3, 25px); }
.p-view { width: 65px; }
.p-view .body { padding-left: 1px; gap: 11px; }
.p-measure { width: 56px; }
.wide { width: 52px; gap: 5px; }
.p-create { width: 79px; }
.p-create .bigs { grid-template-columns: 38px 38px; justify-content: center; }
.gallery { display: flex; flex: none; height: 70px; margin: 5px 0 0 7px; border: 1px solid #bcc3b7; background: #efefef; }
.shapes { display: grid; grid-template-columns: repeat(5, 22px); grid-auto-rows: 22px; }
.gallery-scroll { display: flex; flex-direction: column; width: 14px; border-left: 1px solid #c4c4c4; }
.gallery-scroll button { flex: 1; border-bottom: 1px solid #c4c4c4; }
.gallery-scroll .more { flex: 0 0 16px; border: 0; }
.more-icon { width: 6px; height: 7px; }

/* options bar */
.options { display: flex; height: 26px; flex: none; align-items: center; padding: 0; background: #e1eed5; border-bottom: 1px solid #cfd6c9; white-space: nowrap; }
.context { width: 47px; margin-left: -8px; }
.rule { width: 1px; height: 20px; margin-right: 9px; background: #929b8b; }
.options label { margin-right: 6px; }
.pick {
  appearance: none; height: 21px; padding: 0 18px 0 3px; border: 1px solid #c3c3c3; border-radius: 0; outline: 0;
  background: #dcdddd url("data:image/svg+xml,%3Csvg xmlns='http://www.w3.org/2000/svg' width='10' height='6'%3E%3Cpath d='M1 1l4 4 4-4' fill='none' stroke='%23555'/%3E%3C/svg%3E") no-repeat right 4px center;
}
.w80 { width: 80px; margin-right: 11px; }
.w58 { width: 58px; margin-right: 7px; }
.w62 { width: 62px; margin-right: 6px; }
.w104 { width: 104px; margin-right: 11px; }
.num { width: 120px; height: 22px; padding: 0 3px; margin-right: 11px; border: 1px solid #f5faf0; outline: 1px solid #c9d5be; outline-offset: -2px; background: #e1eed5; color: #777; }
.options label[for="locline"] { margin: 0 3px 0 5px; }
.tick { appearance: none; flex: none; width: 13px; height: 13px; border: 1px solid #333; background: #fff; }
.tick:checked { background: #fff url("data:image/svg+xml,%3Csvg xmlns='http://www.w3.org/2000/svg' width='11' height='11'%3E%3Cpath d='M2 5l3 3 4-6' fill='none' stroke='%23222' stroke-width='1.300'/%3E%3C/svg%3E") no-repeat center; }
.tick:disabled { display: block; border-color: #ccc; }
.tick:disabled:checked { opacity: .6; border-color: #999; }
.options .chain { margin: 0 13px 0 4px; }
.offset { width: 120px; height: 22px; padding: 0 3px; margin-left: -3px; border: 1px solid #555; background: #fff; }

/* workspace */
.workspace { display: flex; flex: 1; min-height: 0; }
.props { display: flex; flex-direction: column; width: 156px; flex: none; padding-top: 20px; background: #ededed; border-right: 2px solid #c9c9c9; }
.type-box { display: flex; align-items: center; height: 72px; flex: none; margin-right: 2px; border: 1px solid #cfcfcf; border-left: 0; padding-right: 2px; }
.type-box p { flex: 1; padding-left: 4px; line-height: 15px; }
.type-box .caret { color: #111; width: 7px; }
.preview { display: flex; align-items: center; width: 5px; height: 66px; background: #fff; border: 1px solid #d0d0d0; border-left: 0; }
.preview i { width: 4px; height: 15px; background: #999; }
.edit-row { display: flex; height: 27px; flex: none; align-items: flex-start; gap: 7px; }
.filter { width: 69px; height: 25px; border: 1px solid #bbb; }
.edit-type { height: 25px; gap: 4px; }
.prop-scroll { display: flex; flex: 1; min-height: 0; overflow: hidden; }
.prop-list { width: 135px; overflow: hidden; background: #fff; }
.prop-table { width: 142px; margin-left: -7px; table-layout: fixed; border-collapse: separate; border-spacing: 0; }
.c1 { width: 37px; }
.c2 { width: 93px; }
.c3 { width: 12px; }
.prop-table tr { height: 20px; }
.prop-table td { height: 20px; padding: 0 0 0 2px; border-right: 1px dotted #999; border-bottom: 1px dotted #999; line-height: 18px; white-space: nowrap; overflow: hidden; }
.prop-table td:first-child { padding: 0; }
.prop-table td .tick { margin-left: 1px; }
.prop-table .focus { padding-left: 1px; border: 1px solid #111; }
.prop-table .off, .params .off { color: #777; }
.head th { height: 20px; padding: 0 5px 0 0; background: #d9d9d9; }
.head svg { display: block; width: 8px; height: 9px; margin-left: auto; }
.scrollbar { display: flex; flex-direction: column; width: 16px; margin-left: 1px; }
.scrollbar svg { width: 16px; height: 16px; flex: none; fill: none; stroke: #222; stroke-width: 1.500; }
.thumb { flex: 0 1 261px; margin-bottom: auto; background: #c8c8c8; }
.apply-row { height: 24px; flex: none; padding-top: 2px; }
.apply-row button { width: 73px; height: 20px; margin-left: 77px; background: #c9c9c9; border: 1px solid #bbb; color: #868686; }

.view { display: flex; flex: 1; flex-direction: column; min-width: 0; background: #fdfdfd; }
.view-tabs { display: flex; height: 21px; flex: none; background: #c9c9c9; }
.vtab { width: 128px; padding: 0 5px; gap: 8px; justify-content: flex-start; color: #999; }
.vtab.active { background: #fdfdfd; }
.close { width: 10px; height: 10px; margin-left: auto; stroke: #111; stroke-width: 1.500; }
.model { flex: 1; min-height: 0; width: 100%; display: block; margin-left: -1px; }
.watermark { font: 700 34px "Noto Sans CJK SC", sans-serif; stroke-width: 2px; stroke-linejoin: round; }
.view-bar { display: flex; height: 18px; flex: none; background: #eee; border-bottom: 2px solid #fafafa; }
.controls { display: flex; width: 646px; flex: none; align-items: center; padding-left: 23px; }
.controls button { width: 21px; }
.scale { width: 55px; font: 11px/16px "Liberation Mono", monospace; white-space: pre; }
.hscroll { display: flex; align-items: center; flex: 1; gap: 2px; }
.hthumb { width: 17px; height: 16px; margin-right: auto; background: #c8c8c8; }
.side { width: 119px; border-left: 2px solid #c9c9c9; }

/* status bar */
.status { display: flex; height: 25px; flex: none; align-items: center; padding-left: 325px; background: #c9c9c9; }
.pick.flat { width: 205px; height: 19px; margin: 2px 9px 0 8px; border: 1px solid #ddd; background-color: #fdfdfd; color: #555; }
.editable { display: flex; align-items: center; width: 53px; gap: 4px; }
.status > svg + svg { margin-left: 9px; }
.flags { display: flex; align-items: center; gap: 10px; margin-left: auto; margin-right: -4px; }
.flags b { margin-left: -9px; font-weight: 400; }

/* taskbar */
.taskbar { display: flex; height: 39px; flex: none; align-items: center; background: #f0e1cd; }
.launch { width: 22px; height: 39px; }
.taskbar button svg { width: 22px; height: 22px; flex: none; }
.revit { width: 62px; margin: 0; padding-left: 12px; }
.task { width: 160px; height: 39px; gap: 5px; justify-content: flex-start; padding-left: 11px; background: #f8f3e9; border-bottom: 2px solid #57b894; }
.tray { display: flex; align-items: center; gap: 9px; margin-left: auto; }
.ime { font-size: 15px; margin-left: -3px; }
.clock { width: 48px; line-height: 19px; text-align: right; padding-right: 2px; }

/* type properties dialog */
.dialog {
  position: absolute; left: 763px; top: 125px; width: 509px;
  background: #eee; border: 1px solid #696969; box-shadow: 0 4px 10px rgba(0, 0, 0, .35);
}
.dialog > h2 { height: 30px; padding-left: 8px; line-height: 29px; background: #fff; }
.half { font: 11px/16px "Liberation Mono", monospace; }
.dlg-body { padding: 10px 12px 11px 21px; }
.dlg-top { display: flex; gap: 13px; }
.fields { display: grid; flex: 1; grid-template-columns: 60px 1fr; column-gap: 9px; row-gap: 9px; align-content: start; align-items: center; }
.fields .pick { border-color: #aaa; background-color: #dedede; }
.actions { display: grid; width: 106px; gap: 7px; }
.actions button, .dlg-buttons button { height: 22px; border: 1px solid #a8a8a8; background: #dfdfdf; }
.actions button:disabled { background: #c9c9c9; border-color: #bbb; color: #888; }
.caption { margin: 3px 0 4px; }
.params { height: 346px; overflow: hidden; border: 1px solid #555; border-width: 1px 0 0 1px; margin-left: 1px; background: #fdfdfd; }
.params table { width: 100%; table-layout: fixed; border-collapse: separate; border-spacing: 0; }
.k { width: 211px; }
.v { width: 229px; }
.params thead th { height: 25px; padding: 0; border-right: 1px solid #111; border-bottom: 1px solid #555; background: #eee; font-weight: 400; }
.params tbody td { height: 20px; padding: 0 2px; border-right: 1px dotted #999; border-bottom: 1px dotted #999; line-height: 17px; }
.params .group th { height: 25px; padding: 0 2px; border-top: 4px solid #fdfdfd; background: #9bb4cf; text-align: left; color: #111; }
.params .cell { padding: 0 1px; }
.edit, .color { width: 100%; height: 18px; border: 1px solid #999; background: #dedede; }
.color { justify-content: flex-start; gap: 4px; background: #eee; border-color: #eee #777 #777 #eee; }
.color i { width: 15px; height: 14px; background: #000; }
.help { display: block; width: max-content; margin-top: 9px; color: #165a94; }
.dlg-buttons { display: flex; gap: 8px; margin-top: 16px; }
.dlg-buttons button { width: 88px; }
.dlg-buttons .push { margin-left: auto; }
.dlg-buttons .default { border-color: #2878b4; background: #b9dcf5; }

.pointer { position: absolute; left: 1177px; top: 639px; width: 60px; height: 60px; }
.pointer svg { width: 60px; height: 60px; }
```
